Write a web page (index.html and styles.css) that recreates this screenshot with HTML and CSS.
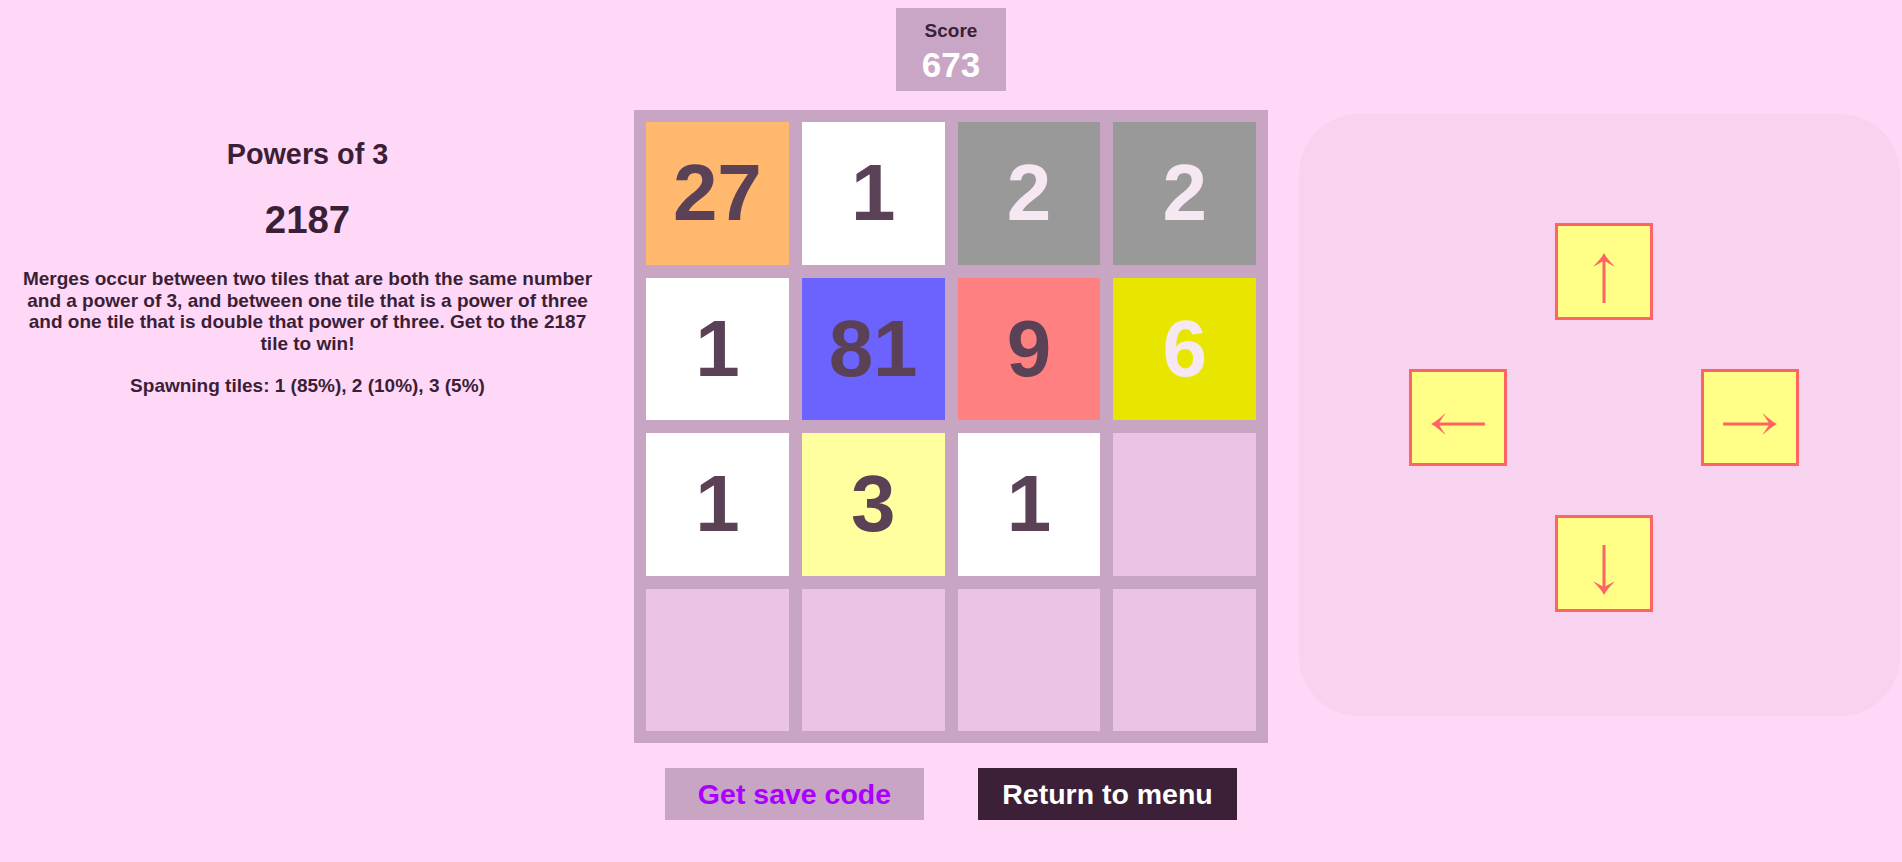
FILE: index.html
```html
<!DOCTYPE html>
<html lang="en">
<head>
<meta charset="utf-8">
<title>Powers of 3</title>
<link rel="stylesheet" href="styles.css">
</head>
<body>
<main class="layout">
  <section class="info">
    <h2 class="info-title">Powers of 3</h2>
    <h1 class="info-goal">2187</h1>
    <p class="info-text">Merges occur between two tiles that are both the same number and a power of 3, and between one tile that is a power of three and one tile that is double that power of three. Get to the 2187 tile to win!</p>
    <p class="info-text">Spawning tiles: 1 (85%), 2 (10%), 3 (5%)</p>
  </section>

  <section class="game">
    <div class="score">
      <div class="score-label">Score</div>
      <div class="score-value">673</div>
    </div>

    <div class="board">
      <div class="tile t27">27</div>
      <div class="tile t1">1</div>
      <div class="tile t2">2</div>
      <div class="tile t2">2</div>

      <div class="tile t1">1</div>
      <div class="tile t81">81</div>
      <div class="tile t9">9</div>
      <div class="tile t6">6</div>

      <div class="tile t1">1</div>
      <div class="tile t3">3</div>
      <div class="tile t1">1</div>
      <div class="tile empty"></div>

      <div class="tile empty"></div>
      <div class="tile empty"></div>
      <div class="tile empty"></div>
      <div class="tile empty"></div>
    </div>

    <div class="actions">
      <button class="btn btn-save">Get save code</button>
      <button class="btn btn-menu">Return to menu</button>
    </div>
  </section>

  <section class="pad">
    <div class="pad-grid">
      <button class="arrow arrow-up" aria-label="Up">
        <svg width="24" height="50" viewBox="0 0 24 50"><path d="M12 0C14 4 18 9 22.3 12.7L22 13.2C18 11 15 9.5 13.5 8.5L13.5 50L10.5 50L10.5 8.5C9 9.5 6 11 2 13.2L1.7 12.7C6 9 10 4 12 0Z"/></svg>
      </button>
      <button class="arrow arrow-left" aria-label="Left">
        <svg width="54" height="24" viewBox="0 0 54 24"><path d="M0 12C4 10 9 6 13.7 1.7L14.2 2C11 6 9.5 9 8.5 10.5L54 10.5L54 13.5L8.5 13.5C9.5 15 11 18 14.2 22L13.7 22.3C9 18 4 14 0 12Z"/></svg>
      </button>
      <button class="arrow arrow-right" aria-label="Right">
        <svg width="54" height="24" viewBox="0 0 54 24"><path d="M54 12C50 10 45 6 40.3 1.7L39.8 2C43 6 44.5 9 45.5 10.5L0 10.5L0 13.5L45.5 13.5C44.5 15 43 18 39.8 22L40.3 22.3C45 18 50 14 54 12Z"/></svg>
      </button>
      <button class="arrow arrow-down" aria-label="Down">
        <svg width="24" height="50" viewBox="0 0 24 50"><path d="M12 50C14 46 18 41 22.3 37.3L22 36.8C18 39 15 40.5 13.5 41.5L13.5 0L10.5 0L10.5 41.5C9 40.5 6 39 2 36.8L1.7 37.3C6 41 10 46 12 50Z"/></svg>
      </button>
    </div>
  </section>
</main>
</body>
</html>
```

FILE: styles.css
```css
html, body {
  margin: 0;
  padding: 0;
}

body {
  background: #ffd8f8;
  font-family: "Liberation Sans", Arial, sans-serif;
  color: #3b1f36;
}

.layout {
  display: flex;
  align-items: flex-start;
  padding-top: 8px;
}

/* left column: rules of the mode */
.info {
  width: 615px;
  padding-top: 130px;
  text-align: center;
}

.info-title {
  margin: 0;
  font-size: 28.8px;
  font-weight: bold;
}

.info-goal {
  margin: 27px 0 0;
  font-size: 38.4px;
  font-weight: bold;
}

.info-text {
  width: 590px;
  margin: 26px auto 0;
  font-size: 19px;
  line-height: 21.7px;
  font-weight: bold;
}

.info-text + .info-text {
  margin-top: 20px;
}

/* centre column: score, board and buttons */
.game {
  width: 634px;
  margin-left: 19px;
  display: flex;
  flex-direction: column;
  align-items: center;
}

.score {
  width: 110px;
  box-sizing: border-box;
  padding: 12px 0 6px;
  background: #c9a6c5;
  text-align: center;
  font-weight: bold;
}

.score-label {
  font-size: 19px;
  line-height: 22px;
  color: #3b1f36;
}

.score-value {
  margin-top: 3px;
  font-size: 35px;
  line-height: 40px;
  color: #ffffff;
}

.board {
  margin-top: 19px;
  width: 634px;
  height: 633px;
  box-sizing: border-box;
  padding: 12px;
  background: #c8a6c3;
  display: grid;
  grid-template-columns: repeat(4, 1fr);
  grid-template-rows: repeat(4, 1fr);
  gap: 13px;
}

.tile {
  display: flex;
  align-items: center;
  justify-content: center;
  font-size: 80px;
  font-weight: bold;
  color: #5a4155;
}

.t1 { background: #ffffff; }
.t2 { background: #999999; color: #f6e8f2; }
.t3 { background: #ffff9f; }
.t6 { background: #e8e600; color: #f6e8f2; }
.t9 { background: #ff8080; }
.t27 { background: #ffb86e; }
.t81 { background: #6c63ff; }
.empty { background: #ebc3e5; }

.actions {
  margin-top: 25px;
  display: flex;
  gap: 54px;
}

.btn {
  width: 259px;
  height: 52px;
  border: none;
  padding: 0;
  font-family: "Liberation Sans", Arial, sans-serif;
  font-size: 28.5px;
  font-weight: bold;
  cursor: pointer;
}

.btn-save {
  background: #c8a6c3;
  color: #aa00ff;
}

.btn-menu {
  background: #3b2038;
  color: #ffffff;
}

/* right column: on-screen direction pad */
.pad {
  width: 601px;
  height: 602px;
  margin-left: 31px;
  margin-top: 106px;
  border-radius: 60px;
  background: #f7d3f0;
  display: flex;
  align-items: center;
  justify-content: center;
  box-sizing: border-box;
  padding: 5px 0 0 8px;
}

.pad-grid {
  display: grid;
  grid-template-columns: repeat(3, 98px);
  grid-template-rows: repeat(3, 97px);
  gap: 49px 48px;
}

.arrow {
  box-sizing: border-box;
  width: 98px;
  height: 97px;
  padding: 13px 0 0;
  border: 3px solid #ff6464;
  background: #ffff88;
  cursor: pointer;
  display: flex;
  align-items: center;
  justify-content: center;
}

.arrow svg {
  display: block;
  fill: #ff6464;
}

.arrow-up { grid-column: 2; grid-row: 1; }
.arrow-left { grid-column: 1; grid-row: 2; }
.arrow-right { grid-column: 3; grid-row: 2; }
.arrow-down { grid-column: 2; grid-row: 3; }
```
